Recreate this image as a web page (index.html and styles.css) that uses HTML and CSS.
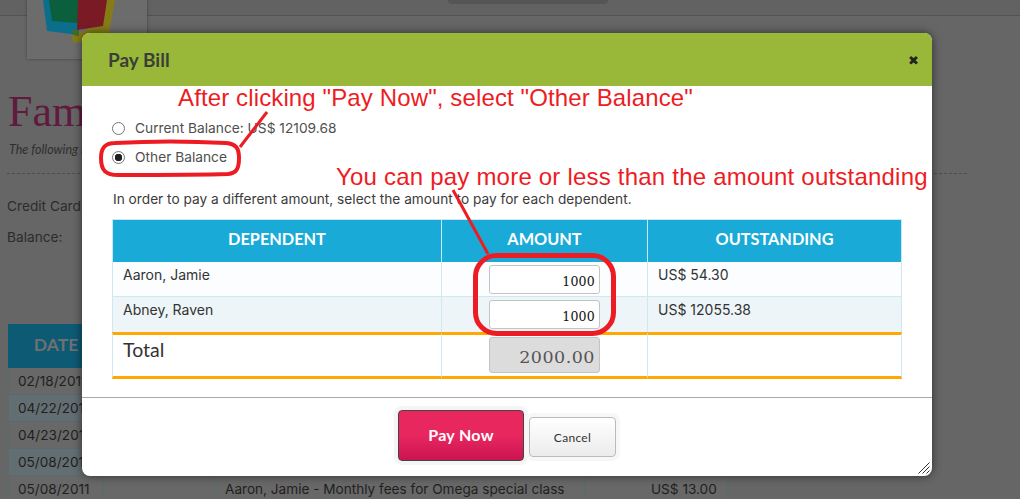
FILE: index.html
```html
<!DOCTYPE html>
<html lang="en">
<head>
<meta charset="utf-8">
<title>Pay Bill</title>
<link rel="stylesheet" href="styles.css">
</head>
<body>
<div class="page">
  <header class="topbar">
    <div class="logo-card">
      <svg class="logo" viewBox="0 0 120 59" width="120" height="59" aria-hidden="true">
        <polygon points="80,0 88,0 81,38 46,43 45,35 60,30" fill="#857c18"/>
        <polygon points="16,0 52,0 52,35 20,31" fill="#0b6f8c"/>
        <polygon points="22,0 51,0 51,23 25,21" fill="#0c5f3c"/>
        <polygon points="51,0 80,0 76,26 50,30" fill="#7a1a24"/>
        <polygon points="45,30 52,30 52,36 46,35" fill="#3f6b2b"/>
      </svg>
    </div>
    <div class="nav-pill"></div>
  </header>
  <main class="account">
    <h1 class="account-title">Family Account</h1>
    <p class="account-note">The following is a summary of your account</p>
    <hr class="dashed">
    <p class="account-line first">Credit Card:</p>
    <p class="account-line">Balance:</p>
    <table class="ledger">
      <thead><tr><th class="c-date">DATE</th><th class="c-ref"></th><th class="c-desc"></th><th class="c-amt"></th></tr></thead>
      <tbody>
        <tr><td>02/18/2011</td><td></td><td></td><td></td></tr>
        <tr class="alt"><td>04/22/2011</td><td></td><td></td><td></td></tr>
        <tr><td>04/23/2011</td><td></td><td></td><td></td></tr>
        <tr class="alt"><td>05/08/2011</td><td></td><td></td><td></td></tr>
        <tr><td>05/08/2011</td><td></td><td class="desc">Aaron, Jamie - Monthly fees for Omega special class</td><td class="amt">US$ 13.00</td></tr>
      </tbody>
    </table>
  </main>

  <section class="modal">
    <div class="modal-head">
      <h2 class="modal-title">Pay Bill</h2>
      <span class="modal-close">✖</span>
    </div>
    <div class="modal-body">
      <label class="choice"><input class="radio" type="radio" name="bal">Current Balance: US$ 12109.68</label>
      <label class="choice"><input class="radio" type="radio" name="bal" checked>Other Balance</label>
      <p class="hint">In order to pay a different amount, select the amount to pay for each dependent.</p>
      <table class="pay">
        <thead><tr><th class="p1">DEPENDENT</th><th class="p2">AMOUNT</th><th class="p3">OUTSTANDING</th></tr></thead>
        <tbody>
          <tr><td>Aaron, Jamie</td><td class="in"><input class="amount" value="1000"></td><td>US$ 54.30</td></tr>
          <tr class="alt"><td>Abney, Raven</td><td class="in"><input class="amount" value="1000"></td><td>US$ 12055.38</td></tr>
        </tbody>
        <tfoot><tr><td class="total">Total</td><td class="in"><input class="amount sum" value="2000.00" readonly></td><td></td></tr></tfoot>
      </table>
    </div>
    <div class="modal-foot">
      <button class="btn-pay" type="button">Pay Now</button>
      <button class="btn-cancel" type="button">Cancel</button>
    </div>
    <svg class="grip" viewBox="0 0 12 12" width="12" height="12" aria-hidden="true">
      <path d="M0.5 11.5L11.5 0.5M4.5 11.5L11.5 4.5M8.5 11.5L11.5 8.5" stroke="#333" stroke-width="1" fill="none"/>
    </svg>
  </section>

  <svg class="marks" viewBox="0 0 1020 499" width="1020" height="499" aria-hidden="true">
    <path class="thin" d="M267 112L240 147" />
    <path class="thin" d="M453 190L488 254" />
    <path d="M115 143C106 143 101 147 101 158C101 171 106 175 118 175C160 175 200 175 228 174C237 173 239 168 239 158C239 148 236 144 226 143C190 141 150 141 115 143Z" />
    <rect class="wide" x="475.5" y="255.5" width="138" height="78" rx="21" ry="21" />
  </svg>
  <p class="note note-a">After clicking "Pay Now", select "Other Balance"</p>
  <p class="note note-b">You can pay more or less than the amount outstanding</p>
</div>
</body>
</html>
```
FILE: styles.css
```css
* { box-sizing: border-box; }
html, body { margin: 0; padding: 0; }
body { font-family: Inter, Lato, sans-serif; color: #333; }
.page { position: relative; width: 1020px; height: 499px; overflow: hidden; background: #666; }

.topbar { display: flex; height: 16px; padding-left: 27px; border-bottom: 1px solid #535353; background: #626262; }
.logo-card { width: 120px; height: 59px; flex: none; background: #6c6c6c; box-shadow: 0 0 3px rgba(0,0,0,.35); }
.logo { display: block; }
.nav-pill { width: 160px; height: 4px; margin-left: 301px; background: #555; border-radius: 0 0 7px 7px; }

.account { padding: 0 0 0 7px; }
.account-title { margin: 74px 0 0 1px; font: 400 44px/44px "Liberation Serif", serif; color: #5f1a3e; white-space: nowrap; }
.account-note { margin: 8px 0 0 2px; font: italic 12.5px/16px Lato, sans-serif; color: #2f2f2f; white-space: nowrap; }
.dashed { width: 960px; height: 0; margin: 15px 0 0; border: 0; border-top: 1px dashed #4d4d4d; }
.account-line { margin: 0; height: 31px; font-size: 13.7px; line-height: 20px; color: #2c2c2c; }
.account-line.first { margin-top: 22px; }
.ledger { margin: 66px 0 0 1px; width: 720px; table-layout: fixed; border-collapse: separate; border-spacing: 0; font-size: 13.6px; color: #1f1f1f; }
.ledger th { height: 44px; padding: 0 0 3px; background: #0d5a75; color: #707070; font: 700 17.5px Lato, sans-serif; }
.ledger td { height: 27px; padding: 0 0 0 10px; background: #686868; border-right: 1px solid #5b6a70; border-bottom: 1px solid #5b6a70; white-space: nowrap; }
.ledger tr.alt td { background: #636e72; }
.ledger td:first-child { padding-left: 9px; border-left: 1px solid #5b6a70; }
.c-date { width: 96px; }
.c-ref { width: 111px; }
.c-desc { width: 370px; }
.ledger .amt { padding-left: 66px; }

.modal { position: absolute; z-index: 2; left: 82px; top: 33px; width: 850px; height: 443px; display: flex; flex-direction: column; background: #fff; border-radius: 8px; box-shadow: 0 0 10px rgba(0,0,0,.55); }
.modal-head { height: 53px; flex: none; display: flex; align-items: center; justify-content: space-between; padding: 0 13px 0 26px; background: #99b839; border-radius: 8px 8px 0 0; }
.modal-title { margin: 0; font: 700 19px Lato, sans-serif; color: #3a3f38; }
.modal-close { font: 700 13px/14px "DejaVu Sans", sans-serif; color: #222; padding-top: 3px; }
.modal-body { padding: 28px 30px 0 30px; flex: none; }
.choice { display: flex; align-items: center; height: 29px; padding-bottom: 2px; font-size: 13.75px; color: #4f4f4f; }
.radio { appearance: none; width: 13px; height: 13px; margin: 2px 10px 0 0; border: 1px solid #767676; border-radius: 50%; background: #fff; }
.radio:checked { background: radial-gradient(circle, #222 0 3.5px, #fff 4px); }
.hint { margin: 17px 0 10px 1px; font-size: 13.7px; line-height: 20px; color: #3b3b3b; white-space: nowrap; }

.pay { width: 790px; table-layout: fixed; border-collapse: separate; border-spacing: 0; font-size: 14px; color: #333; }
.pay th { height: 43px; padding: 0 0 5px; background: #1aaad8; color: #fff; font: 700 16.3px Lato, sans-serif; border-left: 1px solid #c8e8f3; border-top: 1px solid #c8e8f3; }
.pay th:last-child { border-right: 1px solid #c8e8f3; }
.p1 { width: 329px; }
.p2 { width: 206px; }
.pay td { height: 35px; padding: 3px 0 0 10px; vertical-align: top; line-height: 20px; background: #fbfdff; border-left: 1px solid #cfe8f2; border-bottom: 1px solid #cfe8f2; }
.pay td:last-child { border-right: 1px solid #cfe8f2; }
.pay tr.alt td { background: #edf5f8; border-bottom: 0; }
.pay tfoot td { height: 47px; padding-top: 2px; background: #fff; border-top: 3px solid #ffa800; border-bottom: 3px solid #ffa800; }
.pay .in { padding: 3px 0 0; }
.pay tfoot .in { padding-top: 2px; }
.pay .total { padding-top: 3px; padding-left: 10px; font: 19.5px/24px Lato, sans-serif; color: #333; }
.amount { display: block; width: 111px; height: 29px; margin: 0 auto; padding: 3px 4px 0 0; text-align: right; font: 12.5px "DejaVu Serif", serif; letter-spacing: .25px; color: #111; background: #fff; border: 1px solid #c4c4c4; border-radius: 3px; }
.amount.sum { height: 36px; padding-top: 3px; font-size: 17.5px; letter-spacing: .5px; color: #555; background: #dcdcdc; }

.modal-foot { margin-top: 18px; flex: 1; display: flex; align-items: center; justify-content: center; gap: 5px; border-top: 1px solid #aaa; }
.btn-pay { width: 126px; height: 51px; margin-bottom: 3px; padding-bottom: 4px; font: 700 16px Lato, sans-serif; letter-spacing: .3px; color: #fff; background: linear-gradient(#e8275f, #e8275f 50%, #cb1453); border: 1px solid #444; border-radius: 4px; box-shadow: 0 0 0 4px #f5f5f5; }
.btn-cancel { width: 87px; height: 40px; font: 12px Lato, sans-serif; letter-spacing: .3px; color: #333; background: linear-gradient(#fff, #ececec); border: 1px solid #bbb; border-radius: 4px; box-shadow: 0 0 0 4px #f7f7f7; }
.grip { position: absolute; right: 2px; bottom: 2px; }

.marks { position: absolute; z-index: 3; left: 0; top: 0; }
.marks path, .marks rect { fill: none; stroke: #ed1c24; stroke-width: 4; }
.marks .thin { stroke-width: 3; }
.marks .wide { stroke-width: 5; }
.note { position: absolute; z-index: 4; margin: 0; font-family: "Liberation Sans", Arial, sans-serif; font-size: 24px; line-height: 28px; color: #ed1c24; white-space: nowrap; }
.note-a { left: 178px; top: 84px; letter-spacing: .125px; }
.note-b { left: 336px; top: 163px; letter-spacing: .21px; }
```
